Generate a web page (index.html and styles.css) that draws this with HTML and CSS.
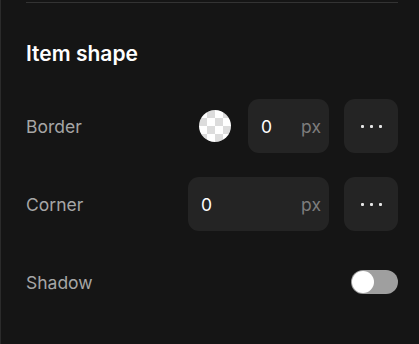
FILE: index.html
```html
<!DOCTYPE html>
<html>
<head>
<meta charset="utf-8">
<link rel="stylesheet" href="styles.css">
</head>
<body>
<div class="panel">
  <div class="divider"></div>
  <h2 class="title">Item shape</h2>
  <div class="rows">
    <div class="row">
      <span class="label">Border</span>
      <div class="controls">
        <span class="swatch"></span>
        <div class="field field-sm"><span class="value">0</span><span class="unit">px</span></div>
        <button class="more"><span></span><span></span><span></span></button>
      </div>
    </div>
    <div class="row">
      <span class="label">Corner</span>
      <div class="controls">
        <div class="field field-lg"><span class="value">0</span><span class="unit">px</span></div>
        <button class="more"><span></span><span></span><span></span></button>
      </div>
    </div>
    <div class="row">
      <span class="label">Shadow</span>
      <div class="controls">
        <span class="toggle"><span class="knob"></span></span>
      </div>
    </div>
  </div>
</div>
</body>
</html>
```
FILE: styles.css
```css
html, body {
  margin: 0;
  padding: 0;
  background: #151515;
  height: 100%;
}
body {
  font-family: Inter, "Noto Sans", sans-serif;
}
.panel {
  box-sizing: border-box;
  height: 344px;
  border-left: 1px solid #2b2b2b;
  padding: 2px 21px 0 25px;
}
.divider {
  height: 1px;
  background: #333333;
}
.title {
  margin: 39px 0 0;
  font-size: 21px;
  line-height: 24px;
  font-weight: 600;
  color: #ffffff;
}
.rows {
  margin-top: 33px;
  display: flex;
  flex-direction: column;
  gap: 24px;
}
.row {
  height: 54px;
  display: flex;
  align-items: center;
}
.label {
  flex: 1;
  font-size: 17.5px;
  color: #a6a6a6;
}
.controls {
  display: flex;
  align-items: center;
}
.swatch {
  width: 32px;
  height: 32px;
  border-radius: 50%;
  margin-right: 17px;
  background-color: #ffffff;
  background-image: conic-gradient(#dcdcdc 25%, #ffffff 0 50%, #dcdcdc 0 75%, #ffffff 0);
  background-size: 16px 16px;
  background-position: 0 0;
}
.field {
  box-sizing: border-box;
  height: 54px;
  border-radius: 11px;
  background: #242424;
  display: flex;
  align-items: center;
  justify-content: space-between;
  padding: 0 8px 0 13px;
  font-size: 17.5px;
}
.field-sm { width: 81px; }
.field-lg { width: 141px; }
.value { color: #ffffff; }
.unit { color: #7d7d7d; }
.more {
  margin-left: 15px;
  width: 54px;
  height: 54px;
  border: 0;
  border-radius: 11px;
  background: #242424;
  display: flex;
  align-items: center;
  justify-content: center;
  gap: 6px;
  padding: 0;
}
.more span {
  width: 3px;
  height: 3px;
  border-radius: 1px;
  background: #e6e6e6;
}
.toggle {
  box-sizing: border-box;
  width: 47px;
  height: 24px;
  border-radius: 12px;
  background: #9f9f9f;
  padding: 1px;
  display: flex;
}
.knob {
  width: 22px;
  height: 22px;
  border-radius: 50%;
  background: #ffffff;
}
```
